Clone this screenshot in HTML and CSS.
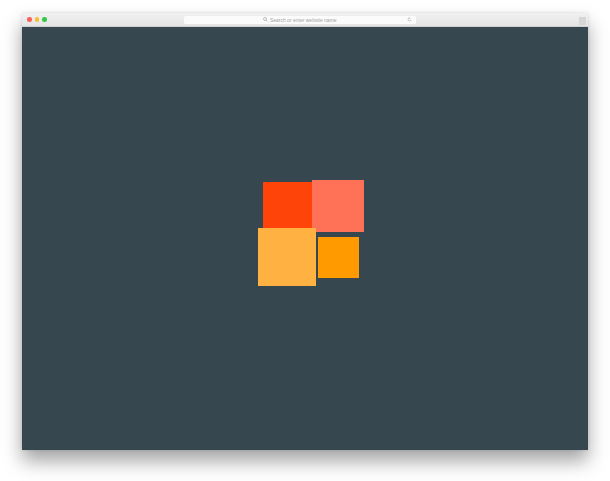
FILE: index.html
```html
<!DOCTYPE html>
<html>
<head>
<meta charset="utf-8">
<link rel="stylesheet" href="styles.css">
</head>
<body>
<div class="page">
  <div class="window">
    <div class="toolbar">
      <div class="dots">
        <span class="dot red"></span>
        <span class="dot yellow"></span>
        <span class="dot green"></span>
      </div>
      <div class="address">
        <svg class="search-icon" viewBox="0 0 10 10" width="5" height="5"><circle cx="4" cy="4" r="3" fill="none" stroke="#9a9a9a" stroke-width="1.2"/><line x1="6.2" y1="6.2" x2="9" y2="9" stroke="#9a9a9a" stroke-width="1.2"/></svg>
        <span class="address-text">Search or enter website name</span>
        <svg class="reload-icon" viewBox="0 0 10 10" width="5" height="5"><path d="M8 5 A3 3 0 1 1 5 2" fill="none" stroke="#9a9a9a" stroke-width="1.1"/><path d="M4.5 0.6 L6.6 2 L4.5 3.4 Z" fill="#9a9a9a"/></svg>
      </div>
      <div class="newtab"></div>
    </div>
    <div class="content">
      <div class="stage">
        <div class="sq sq-red"></div>
        <div class="sq sq-salmon"></div>
        <div class="sq sq-yellow"></div>
        <div class="sq sq-orange"></div>
      </div>
    </div>
  </div>
</div>
</body>
</html>
```
FILE: styles.css
```css
html, body {
  margin: 0;
  padding: 0;
  background: #ffffff;
  font-family: "Liberation Sans", Arial, sans-serif;
}
.page {
  width: 610px;
  height: 481px;
  padding: 13px 22px 0 22px;
  box-sizing: border-box;
}
.window {
  width: 566px;
  height: 437px;
  display: flex;
  flex-direction: column;
  box-shadow: 0 11px 18px rgba(0,0,0,0.36), 0 0 3px rgba(0,0,0,0.12);
}
.toolbar {
  height: 14px;
  flex: 0 0 14px;
  background: linear-gradient(#f1f1f1, #e4e4e4);
  border-bottom: 1px solid #cfcfcf;
  box-sizing: border-box;
  display: flex;
  align-items: center;
  position: relative;
}
.dots {
  display: flex;
  gap: 3px;
  padding-left: 5px;
  width: 157px;
  box-sizing: border-box;
}
.dot {
  width: 4.5px;
  height: 4.5px;
  border-radius: 50%;
  display: block;
}
.dot.red { background: #fc5f57; }
.dot.yellow { background: #fdbc2e; }
.dot.green { background: #33c748; }
.address {
  width: 232px;
  height: 8px;
  margin-left: 5px;
  background: #fbfbfb;
  border-radius: 1.5px;
  display: flex;
  align-items: center;
  justify-content: center;
  position: relative;
  gap: 1.5px;
}
.address-text {
  font-size: 5px;
  color: #a3a3a3;
  line-height: 8px;
  white-space: nowrap;
}
.reload-icon {
  position: absolute;
  right: 4px;
  top: 1.5px;
}
.newtab {
  position: absolute;
  right: 2px;
  top: 4px;
  width: 7px;
  height: 8px;
  background: #d6d6d6;
}
.content {
  flex: 1;
  background: #37474f;
  position: relative;
}
.stage {
  position: absolute;
  left: 236px;
  top: 153px;
  width: 106px;
  height: 106px;
}
.sq {
  position: absolute;
}
.sq-red {
  left: 5px; top: 2px; width: 49px; height: 49px;
  background: #ff4409;
}
.sq-salmon {
  left: 54px; top: 0; width: 52px; height: 52px;
  background: #ff7258;
}
.sq-yellow {
  left: 0; top: 48px; width: 58px; height: 58px;
  background: #ffb142;
}
.sq-orange {
  left: 60px; top: 57px; width: 41px; height: 41px;
  background: #ff9a00;
}
```
